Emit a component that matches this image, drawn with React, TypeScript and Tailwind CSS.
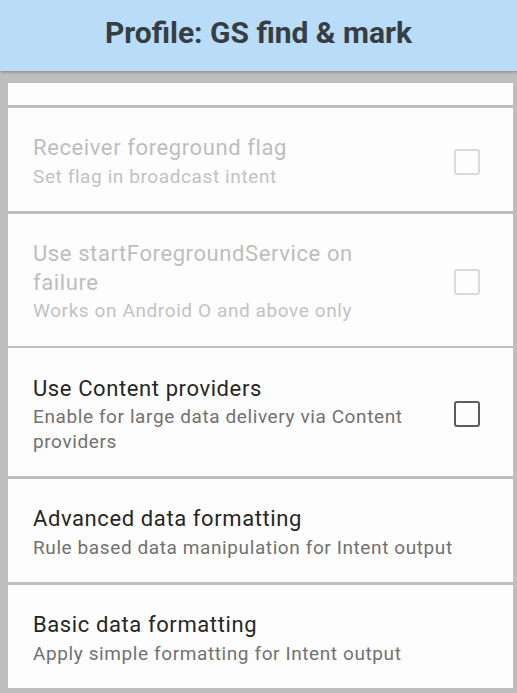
import React from 'react'

type Pref = {
  title?: string
  summary?: string
  checkbox?: boolean
  disabled?: boolean
}

const prefs: Pref[] = [
  { title: 'Receiver foreground flag', summary: 'Set flag in broadcast intent', checkbox: true, disabled: true },
  { title: 'Use startForegroundService on failure', summary: 'Works on Android O and above only', checkbox: true, disabled: true },
  { title: 'Use Content providers', summary: 'Enable for large data delivery via Content providers', checkbox: true },
  { title: 'Advanced data formatting', summary: 'Rule based data manipulation for Intent output' },
  { title: 'Basic data formatting', summary: 'Apply simple formatting for Intent output' },
]

function PrefRow({ pref }: { pref: Pref }) {
  return (
    <div className="flex items-center bg-[#fdfdfd] pl-[25px] pr-[33px] pt-[26.5px] pb-[22px]">
      <div className="flex-1 min-w-0">
        <div className={`text-[22px] leading-[28.5px] tracking-[0.6px] ${pref.disabled ? 'text-[#bdbdbd]' : 'text-[#262626]'}`}>
          {pref.title}
        </div>
        <div className={`mt-[2px] text-[19px] leading-[24.5px] tracking-[0.6px] ${pref.disabled ? 'text-[#c2c2c2]' : 'text-[#717171]'}`}>
          {pref.summary}
        </div>
      </div>
      {pref.checkbox && (
        <div className="ml-[34px] shrink-0">
          <div
            className={`w-[26px] h-[26px] rounded-[3px] border-[2.5px] ${pref.disabled ? 'border-[#dadada]' : 'border-[#5c5c5c]'}`}
          />
        </div>
      )}
    </div>
  )
}

export default function App() {
  return (
    <div className="w-[517px] h-[693px] overflow-hidden flex flex-col bg-[#bebebe] font-['Roboto',sans-serif]">
      <div className="relative z-10 h-[71px] shrink-0 flex items-center justify-center pb-[6px] bg-[#b9dcf8] shadow-[0_1px_3px_rgba(0,0,0,0.3)]">
        <h1 className="text-[30px] font-bold text-[#373e43]">Profile: GS find &amp; mark</h1>
      </div>
      <div className="flex flex-col gap-[2.5px] pl-[8px] pr-[4px] pt-[12px]">
        <div className="h-[22px] bg-[#fdfdfd]" />
        {prefs.map((p) => (
          <PrefRow key={p.title} pref={p} />
        ))}
      </div>
    </div>
  )
}
